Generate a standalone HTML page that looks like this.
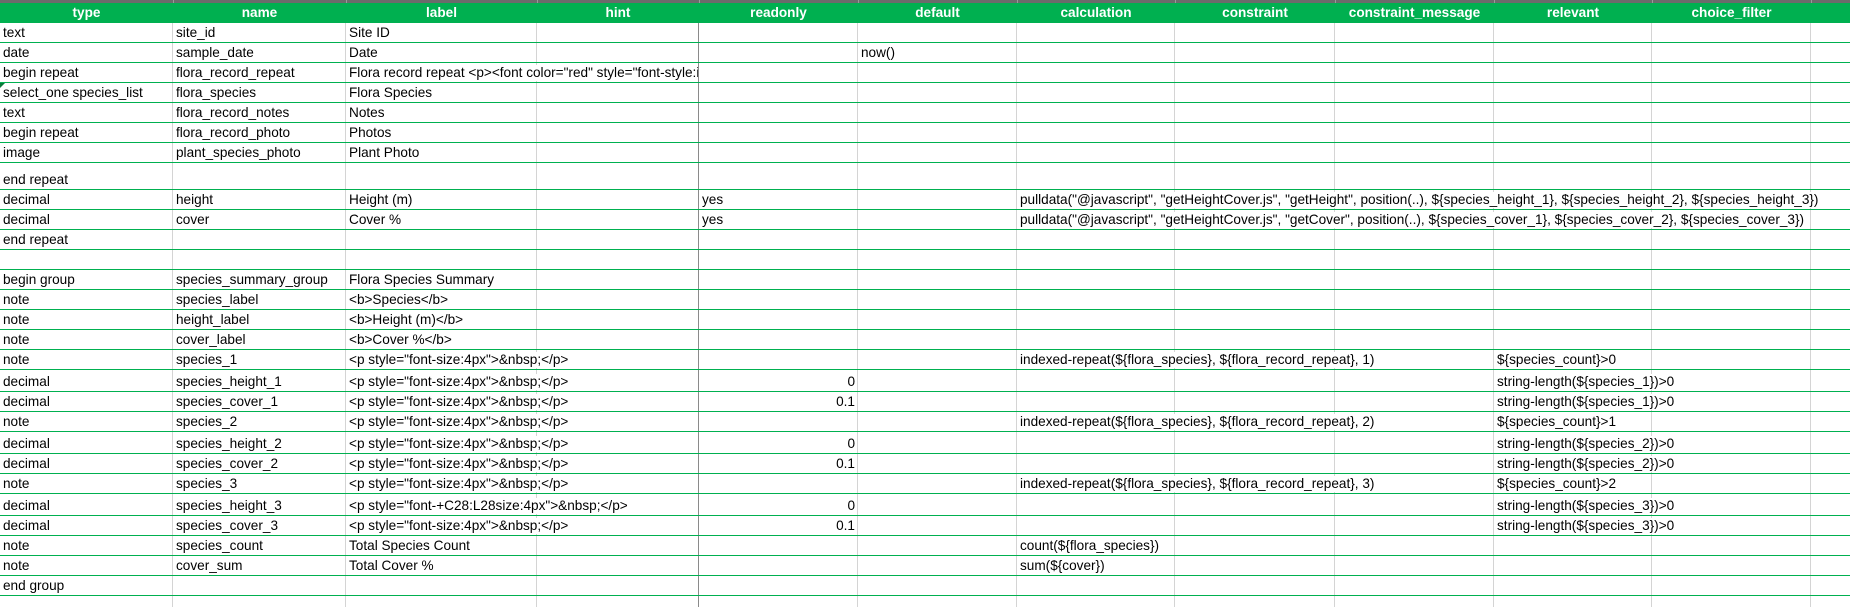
<!DOCTYPE html>
<html><head><meta charset="utf-8"><style>
*{margin:0;padding:0;box-sizing:border-box}
body{width:1850px;height:607px;background:#fff;position:relative;overflow:hidden;font-family:"Liberation Sans",Arial,sans-serif;font-size:13.6px;color:#000}
.top{position:absolute;left:0;top:0;width:1850px;height:3px;background:#6b6b6b}
.hdr{position:absolute;left:0;top:3px;width:1850px;height:20px;background:#00b050}
.h{position:absolute;top:3px;height:20px;line-height:20px;color:#fff;font-weight:bold;text-align:center}
.vg{position:absolute;top:23px;width:1px;height:584px;background:#d4d4d4}
.ts{position:absolute;top:0;width:1px;height:3px;background:#9a9a9a}
.row{position:absolute;left:0;width:1850px;border-bottom:1px solid #00b050}
.c{position:absolute;bottom:1px;line-height:16px;white-space:nowrap;background:#fff;padding:0 1px}
</style></head><body>
<div class="top"></div><div class="hdr"></div>
<div class="ts" style="left:173px"></div><div class="ts" style="left:346px"></div><div class="ts" style="left:537px"></div><div class="ts" style="left:699px"></div><div class="ts" style="left:858px"></div><div class="ts" style="left:1017px"></div><div class="ts" style="left:1175px"></div><div class="ts" style="left:1335px"></div><div class="ts" style="left:1494px"></div><div class="ts" style="left:1652px"></div><div class="ts" style="left:1811px"></div>
<div class="h" style="left:0;width:173px">type</div>
<div class="h" style="left:173px;width:173px">name</div>
<div class="h" style="left:346px;width:191px">label</div>
<div class="h" style="left:537px;width:162px">hint</div>
<div class="h" style="left:699px;width:159px">readonly</div>
<div class="h" style="left:858px;width:159px">default</div>
<div class="h" style="left:1017px;width:158px">calculation</div>
<div class="h" style="left:1175px;width:160px">constraint</div>
<div class="h" style="left:1335px;width:159px">constraint_message</div>
<div class="h" style="left:1494px;width:158px">relevant</div>
<div class="h" style="left:1652px;width:159px">choice_filter</div>

<div class="vg" style="left:172px"></div><div class="vg" style="left:345px"></div><div class="vg" style="left:536px"></div><div class="vg" style="left:698px;background:#8a8a8a"></div><div class="vg" style="left:857px"></div><div class="vg" style="left:1016px"></div><div class="vg" style="left:1174px"></div><div class="vg" style="left:1334px"></div><div class="vg" style="left:1493px"></div><div class="vg" style="left:1651px"></div><div class="vg" style="left:1810px"></div>

<div class="row" style="top:23px;height:20px"><span class="c" style="left:2px">text</span><span class="c" style="left:175px">site_id</span><span class="c" style="left:348px">Site ID</span></div>
<div class="row" style="top:43px;height:20px"><span class="c" style="left:2px">date</span><span class="c" style="left:175px">sample_date</span><span class="c" style="left:348px">Date</span><span class="c" style="left:860px">now()</span></div>
<div class="row" style="top:63px;height:20px"><span class="c" style="left:2px">begin repeat</span><span class="c" style="left:175px">flora_record_repeat</span><span class="c" style="left:348px;width:350px;overflow:hidden">Flora record repeat &lt;p&gt;&lt;font color="red" style="font-style:italic"&gt;</span></div>
<div class="row" style="top:83px;height:20px"><div style="position:absolute;left:0;top:0;width:0;height:0;border-top:5px solid #0a7a3a;border-right:5px solid transparent"></div><span class="c" style="left:2px;background:none">select_one species_list</span><span class="c" style="left:175px">flora_species</span><span class="c" style="left:348px">Flora Species</span></div>
<div class="row" style="top:103px;height:20px"><span class="c" style="left:2px">text</span><span class="c" style="left:175px">flora_record_notes</span><span class="c" style="left:348px">Notes</span></div>
<div class="row" style="top:123px;height:20px"><span class="c" style="left:2px">begin repeat</span><span class="c" style="left:175px">flora_record_photo</span><span class="c" style="left:348px">Photos</span></div>
<div class="row" style="top:143px;height:20px"><span class="c" style="left:2px">image</span><span class="c" style="left:175px">plant_species_photo</span><span class="c" style="left:348px">Plant Photo</span></div>
<div class="row" style="top:163px;height:27px"><span class="c" style="left:2px">end repeat</span></div>
<div class="row" style="top:190px;height:20px"><span class="c" style="left:2px">decimal</span><span class="c" style="left:175px">height</span><span class="c" style="left:348px">Height (m)</span><span class="c" style="left:701px">yes</span><span class="c" style="left:1019px">pulldata("@javascript", "getHeightCover.js", "getHeight", position(..), ${species_height_1}, ${species_height_2}, ${species_height_3})</span></div>
<div class="row" style="top:210px;height:20px"><span class="c" style="left:2px">decimal</span><span class="c" style="left:175px">cover</span><span class="c" style="left:348px">Cover %</span><span class="c" style="left:701px">yes</span><span class="c" style="left:1019px">pulldata("@javascript", "getHeightCover.js", "getCover", position(..), ${species_cover_1}, ${species_cover_2}, ${species_cover_3})</span></div>
<div class="row" style="top:230px;height:20px"><span class="c" style="left:2px">end repeat</span></div>
<div class="row" style="top:250px;height:20px"></div>
<div class="row" style="top:270px;height:20px"><span class="c" style="left:2px">begin group</span><span class="c" style="left:175px">species_summary_group</span><span class="c" style="left:348px">Flora Species Summary</span></div>
<div class="row" style="top:290px;height:20px"><span class="c" style="left:2px">note</span><span class="c" style="left:175px">species_label</span><span class="c" style="left:348px">&lt;b&gt;Species&lt;/b&gt;</span></div>
<div class="row" style="top:310px;height:20px"><span class="c" style="left:2px">note</span><span class="c" style="left:175px">height_label</span><span class="c" style="left:348px">&lt;b&gt;Height (m)&lt;/b&gt;</span></div>
<div class="row" style="top:330px;height:20px"><span class="c" style="left:2px">note</span><span class="c" style="left:175px">cover_label</span><span class="c" style="left:348px">&lt;b&gt;Cover %&lt;/b&gt;</span></div>
<div class="row" style="top:350px;height:20px"><span class="c" style="left:2px">note</span><span class="c" style="left:175px">species_1</span><span class="c" style="left:348px">&lt;p style="font-size:4px"&gt;&amp;nbsp;&lt;/p&gt;</span><span class="c" style="left:1019px">indexed-repeat(${flora_species}, ${flora_record_repeat}, 1)</span><span class="c" style="left:1496px">${species_count}&gt;0</span></div>
<div class="row" style="top:370px;height:22px"><span class="c" style="left:2px">decimal</span><span class="c" style="left:175px">species_height_1</span><span class="c" style="left:348px">&lt;p style="font-size:4px"&gt;&amp;nbsp;&lt;/p&gt;</span><span class="c" style="left:800px;width:56px;text-align:right">0</span><span class="c" style="left:1496px">string-length(${species_1})&gt;0</span></div>
<div class="row" style="top:392px;height:20px"><span class="c" style="left:2px">decimal</span><span class="c" style="left:175px">species_cover_1</span><span class="c" style="left:348px">&lt;p style="font-size:4px"&gt;&amp;nbsp;&lt;/p&gt;</span><span class="c" style="left:800px;width:56px;text-align:right">0.1</span><span class="c" style="left:1496px">string-length(${species_1})&gt;0</span></div>
<div class="row" style="top:412px;height:20px"><span class="c" style="left:2px">note</span><span class="c" style="left:175px">species_2</span><span class="c" style="left:348px">&lt;p style="font-size:4px"&gt;&amp;nbsp;&lt;/p&gt;</span><span class="c" style="left:1019px">indexed-repeat(${flora_species}, ${flora_record_repeat}, 2)</span><span class="c" style="left:1496px">${species_count}&gt;1</span></div>
<div class="row" style="top:432px;height:22px"><span class="c" style="left:2px">decimal</span><span class="c" style="left:175px">species_height_2</span><span class="c" style="left:348px">&lt;p style="font-size:4px"&gt;&amp;nbsp;&lt;/p&gt;</span><span class="c" style="left:800px;width:56px;text-align:right">0</span><span class="c" style="left:1496px">string-length(${species_2})&gt;0</span></div>
<div class="row" style="top:454px;height:20px"><span class="c" style="left:2px">decimal</span><span class="c" style="left:175px">species_cover_2</span><span class="c" style="left:348px">&lt;p style="font-size:4px"&gt;&amp;nbsp;&lt;/p&gt;</span><span class="c" style="left:800px;width:56px;text-align:right">0.1</span><span class="c" style="left:1496px">string-length(${species_2})&gt;0</span></div>
<div class="row" style="top:474px;height:20px"><span class="c" style="left:2px">note</span><span class="c" style="left:175px">species_3</span><span class="c" style="left:348px">&lt;p style="font-size:4px"&gt;&amp;nbsp;&lt;/p&gt;</span><span class="c" style="left:1019px">indexed-repeat(${flora_species}, ${flora_record_repeat}, 3)</span><span class="c" style="left:1496px">${species_count}&gt;2</span></div>
<div class="row" style="top:494px;height:22px"><span class="c" style="left:2px">decimal</span><span class="c" style="left:175px">species_height_3</span><span class="c" style="left:348px">&lt;p style="font-+C28:L28size:4px"&gt;&amp;nbsp;&lt;/p&gt;</span><span class="c" style="left:800px;width:56px;text-align:right">0</span><span class="c" style="left:1496px">string-length(${species_3})&gt;0</span></div>
<div class="row" style="top:516px;height:20px"><span class="c" style="left:2px">decimal</span><span class="c" style="left:175px">species_cover_3</span><span class="c" style="left:348px">&lt;p style="font-size:4px"&gt;&amp;nbsp;&lt;/p&gt;</span><span class="c" style="left:800px;width:56px;text-align:right">0.1</span><span class="c" style="left:1496px">string-length(${species_3})&gt;0</span></div>
<div class="row" style="top:536px;height:20px"><span class="c" style="left:2px">note</span><span class="c" style="left:175px">species_count</span><span class="c" style="left:348px">Total Species Count</span><span class="c" style="left:1019px">count(${flora_species})</span></div>
<div class="row" style="top:556px;height:20px"><span class="c" style="left:2px">note</span><span class="c" style="left:175px">cover_sum</span><span class="c" style="left:348px">Total Cover %</span><span class="c" style="left:1019px">sum(${cover})</span></div>
<div class="row" style="top:576px;height:20px"><span class="c" style="left:2px">end group</span></div>
</body></html>
